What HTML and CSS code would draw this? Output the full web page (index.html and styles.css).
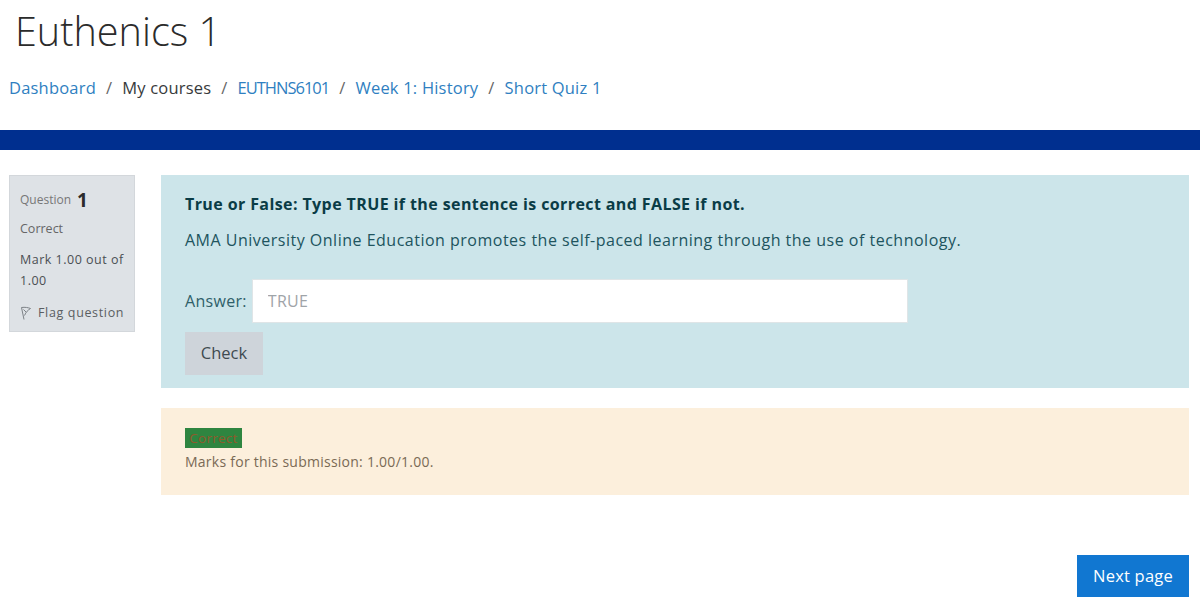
FILE: index.html
```html
<!DOCTYPE html>
<html lang="en">
<head>
<meta charset="utf-8">
<title>Euthenics 1</title>
<link rel="stylesheet" href="styles.css">
</head>
<body>
<header class="page-header">
  <h1 class="course-title">Euthenics 1</h1>
  <nav class="breadcrumb">
    <a href="#">Dashboard</a><span class="sep">/</span>
    <span>My courses</span><span class="sep">/</span>
    <a href="#" class="code">EUTHNS6101</a><span class="sep">/</span>
    <a href="#">Week 1: History</a><span class="sep">/</span>
    <a href="#">Short Quiz 1</a>
  </nav>
</header>
<div class="band"></div>
<main class="quiz">
  <aside class="info">
    <div class="qno">Question <b>1</b></div>
    <div class="state">Correct</div>
    <div class="grade">Mark 1.00 out of 1.00</div>
    <div class="flag">
      <svg class="flag-icon" viewBox="0 0 12 14" width="12" height="14" aria-hidden="true">
        <path d="M4 13.5 L1.5 1.5 C5 1 8 1.5 10.5 2.5 C8 4 6 6 4.5 9.5 M3.5 3.5 L6 6" fill="none" stroke="#7d8287" stroke-width="1"/>
      </svg>
      <span>Flag question</span>
    </div>
  </aside>
  <div class="content">
    <section class="formulation">
      <p class="prompt">True or False: Type TRUE if the sentence is correct and FALSE if not.</p>
      <p class="sentence">AMA University Online Education promotes the self-paced learning through the use of technology.</p>
      <div class="answer">
        <label for="a1">Answer:</label>
        <input id="a1" class="answer-input" type="text" value="TRUE">
      </div>
      <button class="check" type="button">Check</button>
    </section>
    <section class="outcome">
      <span class="badge">Correct</span>
      <div class="marks">Marks for this submission: 1.00/1.00.</div>
    </section>
    <div class="actions">
      <button class="next" type="button">Next page</button>
    </div>
  </div>
</main>
</body>
</html>
```
FILE: styles.css
```css
* { box-sizing: border-box; }
html, body { margin: 0; padding: 0; }
body {
  background: #fff;
  color: #373a3c;
  font-family: "Open Sans", "Liberation Sans", sans-serif;
  font-size: 15px;
  height: 611px;
  overflow: hidden;
}
.page-header { height: 130px; padding: 0 9px; }
.course-title {
  margin: 0;
  padding: 6px 0 0 6px;
  font-size: 39.6px;
  font-weight: 300;
  line-height: 50px;
  color: #2b2b2b;
}
.breadcrumb {
  margin-top: 21px;
  font-size: 16.5px;
  line-height: 22px;
  letter-spacing: 0.2px;
  display: flex;
  color: #373a3c;
}
.breadcrumb a { color: #2f7fc1; text-decoration: none; }
.breadcrumb a.code { letter-spacing: -1px; }
.sep { margin: 0 10px; color: #666; }
.band { height: 20px; background: #002f8f; }
.quiz {
  display: flex;
  align-items: flex-start;
  padding: 25px 11px 0 9px;
  gap: 26px;
}
.info {
  width: 126px;
  height: 157px;
  flex: none;
  background: #dee2e6;
  border: 1px solid #d3d7db;
  padding: 12px 10px 0;
  font-size: 12.5px;
  line-height: 20px;
  letter-spacing: 0.5px;
  color: #4b4f53;
}
.qno { height: 24px; color: #777; font-size: 12px; letter-spacing: 0; display: flex; align-items: center; gap: 6px; }
.qno b { font-size: 19px; color: #2b2b2b; font-weight: 700; }
.state { margin-top: 7px; color: #666; letter-spacing: 0; }
.grade { margin-top: 10px; line-height: 21px; }
.flag { margin-top: 12px; display: flex; align-items: center; gap: 6px; letter-spacing: 0.65px; white-space: nowrap; color: #5a5e62; }
.flag-icon { flex: none; }
.content { flex: 1; min-width: 0; }
.formulation {
  height: 213px;
  background: #cce5ea;
  padding: 17px 24px 0;
  color: #0d4a55;
}
.formulation p { margin: 0; }
.prompt { font-weight: 700; font-size: 16px; line-height: 24px; letter-spacing: 0.4px; color: #0a3c46; }
.sentence { margin-top: 12px !important; line-height: 24px; font-size: 16px; letter-spacing: 0.5px; color: #20545e; }
.answer { margin-top: 27px; display: flex; align-items: center; gap: 5px; color: #2f5f69; font-size: 16px; letter-spacing: 0.3px; }
.answer-input {
  width: 656px;
  height: 44px;
  background: #fff;
  border: 1px solid #dfe5e7;
  padding: 0 15px;
  font: inherit;
  font-size: 16px;
  letter-spacing: 0.3px;
  color: #9fa4a8;
}
.check {
  display: block;
  margin-top: 9px;
  width: 78px;
  height: 43px;
  padding-bottom: 3px;
  background: #ced4da;
  border: 0;
  font: inherit;
  font-size: 16.5px;
  color: #3f4a50;
}
.outcome {
  margin-top: 20px;
  height: 87px;
  background: #fcefdc;
  padding: 20px 24px 0;
  color: #7a6a55;
  font-size: 14px;
  letter-spacing: 0.25px;
}
.badge {
  display: block;
  width: 57px;
  height: 20px;
  background: #2e8540;
  color: #8f5a2c;
  font-size: 13.5px;
  line-height: 20px;
  text-align: center;
}
.marks { margin-top: 4px; line-height: 20px; }
.actions { margin-top: 60px; display: flex; justify-content: flex-end; }
.next {
  width: 112px;
  height: 42px;
  padding-bottom: 2px;
  background: #1177d1;
  border: 0;
  color: #fff;
  font: inherit;
  font-size: 16.5px;
  letter-spacing: 0.2px;
}
```
